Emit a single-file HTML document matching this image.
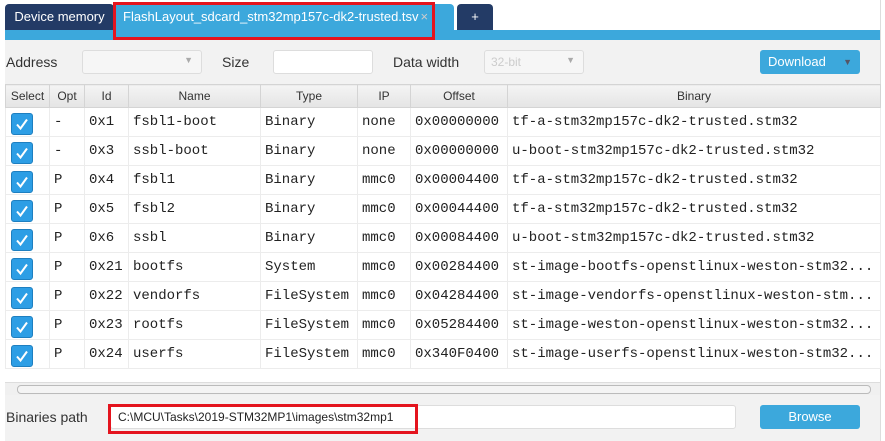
<!DOCTYPE html>
<html><head><style>
body{margin:0;width:885px;height:441px;overflow:hidden;background:#fff;font-family:"Liberation Sans",sans-serif;position:relative}
.a{position:absolute}
.tab{position:absolute;top:4px;height:26px;border-radius:4px 4px 0 0;color:#fff;font-size:13px;line-height:26px;white-space:nowrap;overflow:hidden}
.panel{position:absolute;left:5px;top:40px;width:875px;height:401px;background:#f2f2f2}
.lbl{position:absolute;font-size:14px;color:#333}
.box{position:absolute;background:#f6f6f6;border:1px solid #ddd;border-radius:3px}
table{position:absolute;left:5px;top:84px;width:875px;table-layout:fixed;border-collapse:collapse;background:#fff}
th{height:22px;background:linear-gradient(#f4f4f4,#e4e4e4);font-weight:normal;font-size:12px;color:#333;border:1px solid #d4d4d4;padding:0}
td{height:28px;line-height:28px;border:1px solid #ececec;font-family:"Liberation Mono",monospace;font-size:14px;color:#222;padding:0 0 0 4px;white-space:nowrap;overflow:hidden;box-sizing:border-box}
.cb{display:block;width:20px;height:20px;background:#2d9ee5;border:1px solid #1e7fc0;border-radius:3px;margin-top:4px;position:relative}
</style></head><body>
<div class="tab" style="left:5px;width:109px;background:#233b66;text-align:center">Device memory</div>
<div class="tab" style="left:115px;width:339px;background:#3ca8dc;padding-left:8px;box-sizing:border-box">FlashLayout_sdcard_stm32mp157c-dk2-trusted.tsv<span style="color:#ccc;margin-left:2px">×</span></div>
<div class="tab" style="left:457px;width:36px;background:#233b66;text-align:center">+</div>
<div class="a" style="left:5px;top:30px;width:875px;height:10px;background:#3ca8dc"></div>
<div class="a" style="left:880px;top:0;width:1px;height:441px;background:#ddd"></div>
<div class="panel"></div>
<div class="lbl" style="left:6px;top:54px">Address</div>
<div class="box" style="left:82px;top:50px;width:118px;height:22px"><span style="position:absolute;right:8px;top:4px;color:#aaa;font-size:9px">▼</span></div>
<div class="lbl" style="left:222px;top:54px">Size</div>
<div class="box" style="left:273px;top:50px;width:98px;height:22px;background:#fff"></div>
<div class="lbl" style="left:393px;top:54px">Data width</div>
<div class="box" style="left:484px;top:50px;width:98px;height:22px"><span style="position:absolute;left:6px;top:4px;color:#ccc;font-size:12px">32-bit</span><span style="position:absolute;right:8px;top:4px;color:#aaa;font-size:9px">▼</span></div>
<div class="a" style="left:760px;top:50px;width:100px;height:24px;background:#3ca8dc;border-radius:3px;color:#fff;font-size:13px;line-height:24px"><span style="margin-left:8px">Download</span><span style="position:absolute;right:8px;font-size:9px;color:#556">▼</span></div>
<table>
<colgroup><col style="width:44px"><col style="width:35px"><col style="width:44px"><col style="width:132px"><col style="width:97px"><col style="width:53px"><col style="width:97px"><col style="width:373px"></colgroup>
<tr><th>Select</th><th>Opt</th><th>Id</th><th>Name</th><th>Type</th><th>IP</th><th>Offset</th><th>Binary</th></tr>
<tbody id="b"></tbody>
</table>
<div class="a" style="left:5px;top:369px;width:875px;height:13px;background:#fff"></div>
<div class="a" style="left:5px;top:382px;width:875px;height:12px;background:#f0f0f0;border-top:1px solid #ddd"><div style="position:absolute;left:12px;top:2px;width:852px;height:7px;border:1px solid #bbb;border-radius:4px;background:#f4f4f4"></div></div>
<div class="lbl" style="left:6px;top:409px">Binaries path</div>
<div class="box" style="left:110px;top:405px;width:624px;height:22px;background:#fff"><span style="position:absolute;left:7px;top:4px;font-size:12px;color:#222">C:\MCU\Tasks\2019-STM32MP1\images\stm32mp1</span></div>
<div class="a" style="left:760px;top:405px;width:100px;height:24px;background:#3ca8dc;border-radius:3px;color:#fff;font-size:13px;line-height:24px;text-align:center">Browse</div>
<div class="a" style="left:113px;top:2px;width:316px;height:32px;border:3px solid #e4141e"></div>
<div class="a" style="left:108px;top:404px;width:304px;height:24px;border:3px solid #e4141e"></div>
<script>
var r=[["-","0x1","fsbl1-boot","Binary","none","0x00000000","tf-a-stm32mp157c-dk2-trusted.stm32"],
["-","0x3","ssbl-boot","Binary","none","0x00000000","u-boot-stm32mp157c-dk2-trusted.stm32"],
["P","0x4","fsbl1","Binary","mmc0","0x00004400","tf-a-stm32mp157c-dk2-trusted.stm32"],
["P","0x5","fsbl2","Binary","mmc0","0x00044400","tf-a-stm32mp157c-dk2-trusted.stm32"],
["P","0x6","ssbl","Binary","mmc0","0x00084400","u-boot-stm32mp157c-dk2-trusted.stm32"],
["P","0x21","bootfs","System","mmc0","0x00284400","st-image-bootfs-openstlinux-weston-stm32..."],
["P","0x22","vendorfs","FileSystem","mmc0","0x04284400","st-image-vendorfs-openstlinux-weston-stm..."],
["P","0x23","rootfs","FileSystem","mmc0","0x05284400","st-image-weston-openstlinux-weston-stm32..."],
["P","0x24","userfs","FileSystem","mmc0","0x340F0400","st-image-userfs-openstlinux-weston-stm32..."]];
var h="";r.forEach(function(x){h+='<tr style="height:29px"><td style="padding:0 0 0 5px"><span class="cb"><svg width="20" height="20" style="position:absolute;left:0;top:0"><path d="M5 10.5l3.5 4L15 5.5" stroke="#fff" stroke-width="2" fill="none"/></svg></span></td>';x.forEach(function(c){h+="<td>"+c+"</td>"});h+="</tr>"});
document.getElementById("b").innerHTML=h;
</script>
</body></html>
